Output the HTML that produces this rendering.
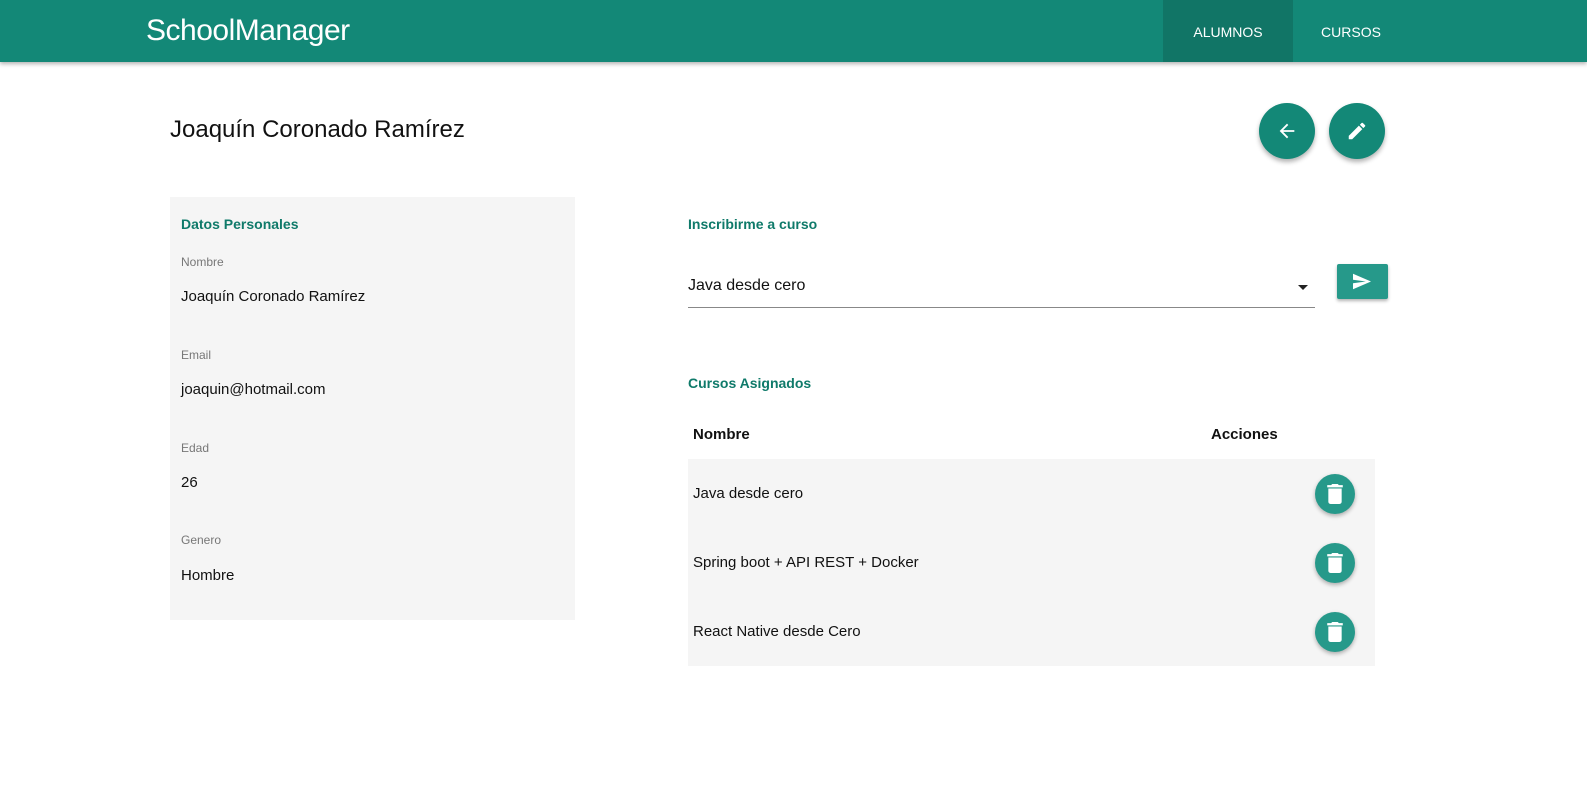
<!DOCTYPE html>
<html><head><meta charset="utf-8"><style>
*{box-sizing:border-box;margin:0;padding:0}
body{width:1587px;height:795px;background:#fff;font-family:"Liberation Sans",Arial,sans-serif;color:#111;position:relative;overflow:hidden}
.hdr{position:absolute;left:0;top:0;width:1587px;height:62px;background:#138877;box-shadow:0 2px 4px rgba(0,0,0,.3)}
.logo{position:absolute;left:146px;top:14px;color:#fff;font-size:30px;letter-spacing:-0.5px}
.tab{position:absolute;top:0;height:62px;line-height:64px;color:#fff;font-size:14px;text-align:center}
.abs{position:absolute}
.fab{position:absolute;width:56px;height:56px;border-radius:50%;background:#138877;box-shadow:0 3px 5px rgba(0,0,0,.3)}
.fab svg,.del svg{position:absolute;left:50%;top:50%;transform:translate(-50%,-50%)}
.card{position:absolute;left:170px;top:197px;width:405px;height:423px;background:#f5f5f5}
.g{color:#0f7a6a;font-weight:bold;font-size:14px}
.lbl{font-size:12px;color:#777}
.val{font-size:15px}
.row{position:absolute;left:688px;width:687px;height:69px;background:#f5f5f5}
.row span{position:absolute;left:5px;top:26px;font-size:15px}
.del{position:absolute;left:627px;top:15px;width:40px;height:40px;border-radius:50%;background:#26998a;box-shadow:0 2px 4px rgba(0,0,0,.3)}
</style></head><body>
<div class="hdr">
<div class="logo">SchoolManager</div>
<div class="tab" style="left:1163px;width:130px;background:#117566">ALUMNOS</div>
<div class="tab" style="left:1293px;width:116px">CURSOS</div>
</div>
<div class="abs" style="left:170px;top:116px;font-size:24px">Joaquín Coronado Ramírez</div>
<div class="fab" style="left:1259px;top:103px"><svg width="22" height="22" viewBox="0 0 24 24"><path fill="#fff" d="M20 11H7.83l5.59-5.59L12 4l-8 8 8 8 1.41-1.41L7.83 13H20v-2z"/></svg></div>
<div class="fab" style="left:1329px;top:103px"><svg width="22" height="22" viewBox="0 0 24 24"><path fill="#fff" d="M3 17.25V21h3.75L17.81 9.94l-3.75-3.75L3 17.25zM20.71 7.04a1 1 0 000-1.41l-2.34-2.34a1 1 0 00-1.41 0l-1.83 1.83 3.75 3.75 1.83-1.83z"/></svg></div>

<div class="card">
<div class="abs g" style="left:11px;top:19px">Datos Personales</div>
<div class="abs lbl" style="left:11px;top:58px">Nombre</div>
<div class="abs val" style="left:11px;top:91px">Joaquín Coronado Ramírez</div>
<div class="abs lbl" style="left:11px;top:151px">Email</div>
<div class="abs val" style="left:11px;top:184px">joaquin@hotmail.com</div>
<div class="abs lbl" style="left:11px;top:244px">Edad</div>
<div class="abs val" style="left:11px;top:277px">26</div>
<div class="abs lbl" style="left:11px;top:336px">Genero</div>
<div class="abs val" style="left:11px;top:370px">Hombre</div>
</div>

<div class="abs g" style="left:688px;top:216px">Inscribirme a curso</div>
<div class="abs val" style="left:688px;top:277px;font-size:16px">Java desde cero</div>
<div class="abs" style="left:1298px;top:285px;width:0;height:0;border-left:5px solid transparent;border-right:5px solid transparent;border-top:5px solid #222"></div>
<div class="abs" style="left:688px;top:307px;width:627px;height:1px;background:#888"></div>
<div class="abs" style="left:1337px;top:264px;width:51px;height:35px;background:#26998a;border-radius:2px;box-shadow:0 2px 3px rgba(0,0,0,.3)"><svg style="position:absolute;left:16px;top:9px" width="18" height="17" viewBox="2 3 21 18"><path fill="#fff" d="M2.01 21L23 12 2.01 3 2 10l15 2-15 2z"/></svg></div>

<div class="abs g" style="left:688px;top:375px">Cursos Asignados</div>
<div class="abs" style="left:693px;top:426px;font-weight:bold;font-size:15px">Nombre</div>
<div class="abs" style="left:1211px;top:426px;font-weight:bold;font-size:15px">Acciones</div>
<div class="row" style="top:459px"><span>Java desde cero</span><div class="del"><svg width="18" height="20" viewBox="5 3 14 18"><path fill="#fff" d="M6 19c0 1.1.9 2 2 2h8c1.1 0 2-.9 2-2V7H6v12zM19 4h-3.5l-1-1h-5l-1 1H5v2h14V4z"/></svg></div></div>
<div class="row" style="top:528px"><span>Spring boot + API REST + Docker</span><div class="del"><svg width="18" height="20" viewBox="5 3 14 18"><path fill="#fff" d="M6 19c0 1.1.9 2 2 2h8c1.1 0 2-.9 2-2V7H6v12zM19 4h-3.5l-1-1h-5l-1 1H5v2h14V4z"/></svg></div></div>
<div class="row" style="top:597px"><span>React Native desde Cero</span><div class="del"><svg width="18" height="20" viewBox="5 3 14 18"><path fill="#fff" d="M6 19c0 1.1.9 2 2 2h8c1.1 0 2-.9 2-2V7H6v12zM19 4h-3.5l-1-1h-5l-1 1H5v2h14V4z"/></svg></div></div>
</body></html>
